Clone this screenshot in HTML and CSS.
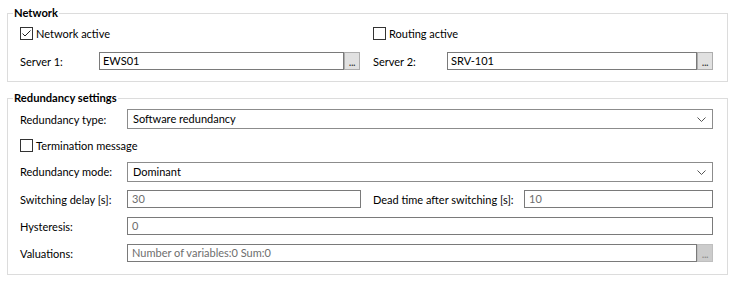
FILE: index.html
```html
<!DOCTYPE html>
<html lang="en">

<head>
  <meta charset="UTF-8" />
  <meta name="viewport" content="width=device-width, initial-scale=1.0" />
  <title>Network settings</title>
  <link rel="stylesheet" href="styles.css">
</head>

<body>
  <div class="panel">
    <!-- Network -->
    <fieldset class="group group-net">
      <legend>Network</legend>
      <div class="net-grid">
        <label class="check check-l">
          <span class="box">
            <svg width="11" height="11" viewBox="0 0 11 11">
              <path d="M1.5 5.5 L4 8 L9.5 2.5" fill="none" stroke="#222" stroke-width="1" />
            </svg>
          </span>
          Network active
        </label>
        <label class="check check-r">
          <span class="box"></span>
          Routing active
        </label>

        <span class="lbl">Server 1:</span>
        <div class="field">EWS01</div>
        <button class="dots">...</button>
        <span></span>
        <span class="lbl">Server 2:</span>
        <div class="field">SRV-101</div>
        <button class="dots">...</button>
      </div>
    </fieldset>

    <!-- Redundancy settings -->
    <fieldset class="group group-red">
      <legend>Redundancy settings</legend>
      <div class="red-grid">
        <span class="lbl">Redundancy type:</span>
        <div class="combo span-all">
          Software redundancy
          <svg class="chev" width="9" height="5" viewBox="0 0 9 5">
            <path d="M0.5 0.5 L4.5 4.5 L8.5 0.5" fill="none" stroke="#555" stroke-width="1" />
          </svg>
        </div>

        <label class="check row-check">
          <span class="box"></span>
          Termination message
        </label>

        <span class="lbl">Redundancy mode:</span>
        <div class="combo span-all">
          Dominant
          <svg class="chev" width="9" height="5" viewBox="0 0 9 5">
            <path d="M0.5 0.5 L4.5 4.5 L8.5 0.5" fill="none" stroke="#555" stroke-width="1" />
          </svg>
        </div>

        <span class="lbl">Switching delay [s]:</span>
        <div class="field off">30</div>
        <span></span>
        <span class="lbl">Dead time after switching [s]:</span>
        <div class="field off">10</div>

        <span class="lbl">Hysteresis:</span>
        <div class="field off span-all">0</div>

        <span class="lbl">Valuations:</span>
        <div class="span-all pick">
          <div class="field off">Number of variables:0 Sum:0</div>
          <button class="dots" disabled>...</button>
        </div>
      </div>
    </fieldset>
  </div>
</body>

</html>
```

FILE: styles.css
```css
* {
  margin: 0;
  padding: 0;
  box-sizing: border-box;
}

body {
  background: #fff;
  font-family: Lato, "Noto Sans", sans-serif;
  font-size: 11px;
  color: #000;
}

.panel {
  width: 732px;
  padding-top: 5px;
}

.group {
  width: 721px;
  margin-left: 7px;
  border: 1px solid #dcdcdc;
  padding: 0 14px 0 12px;
}

.group legend {
  margin-left: -7px;
  padding: 0 1px;
  font-weight: bold;
  line-height: 16px;
  font-size: 11.2px;
}

.group-net {
  padding-top: 6px;
  padding-bottom: 11px;
}

.group-red {
  margin-top: 8px;
  padding-top: 3px;
  padding-bottom: 12px;
}

.lbl {
  white-space: nowrap;
  line-height: 13px;
}

/* checkbox */
.check {
  display: flex;
  align-items: center;
  gap: 3px;
  height: 13px;
  line-height: 13px;
  white-space: nowrap;
}

.box {
  display: flex;
  align-items: center;
  justify-content: center;
  width: 13px;
  height: 13px;
  border: 1px solid #333;
  background: #fff;
}

/* network grid */
.net-grid {
  display: grid;
  grid-template-columns: 79px 245px 16px 13px 74px 250px 16px;
  grid-template-rows: 13px 18px;
  row-gap: 12px;
  align-items: center;
}

.check-l {
  grid-column: 1 / 4;
}

.check-r {
  grid-column: 5 / 8;
}

.field {
  height: 18px;
  border: 1px solid #7a7a7a;
  background: #fff;
  padding-left: 3px;
  line-height: 16px;
  white-space: nowrap;
  overflow: hidden;
}

.field.off {
  color: #6d6d6d;
  padding-left: 4px;
}

.dots {
  height: 18px;
  width: 16px;
  border: 1px solid #adadad;
  background: #e1e1e1;
  font-family: inherit;
  font-size: 11px;
  line-height: 14px;
  padding-top: 1px;
  text-align: center;
  color: #333;
  letter-spacing: -0.5px;
}

.dots:disabled {
  background: #cccccc;
  border-color: #bfbfbf;
  color: #8a8a8a;
}

/* redundancy grid */
.red-grid {
  display: grid;
  grid-template-columns: 107px 234px 12px 151px 189px;
  grid-template-rows: 20px 15px 19px 18px 18px 18px;
  row-gap: 9px;
  align-items: center;
}

.span-all {
  grid-column: 2 / 6;
}

.row-check {
  grid-column: 1 / 6;
}

.combo {
  position: relative;
  align-self: start;
  height: 20px;
  border: 1px solid #8c8c8c;
  background: #fff;
  padding-left: 5px;
  line-height: 18px;
}

.chev {
  position: absolute;
  right: 6px;
  top: 7px;
}

.pick {
  display: flex;
}

.pick .field {
  flex: 1;
}
```
